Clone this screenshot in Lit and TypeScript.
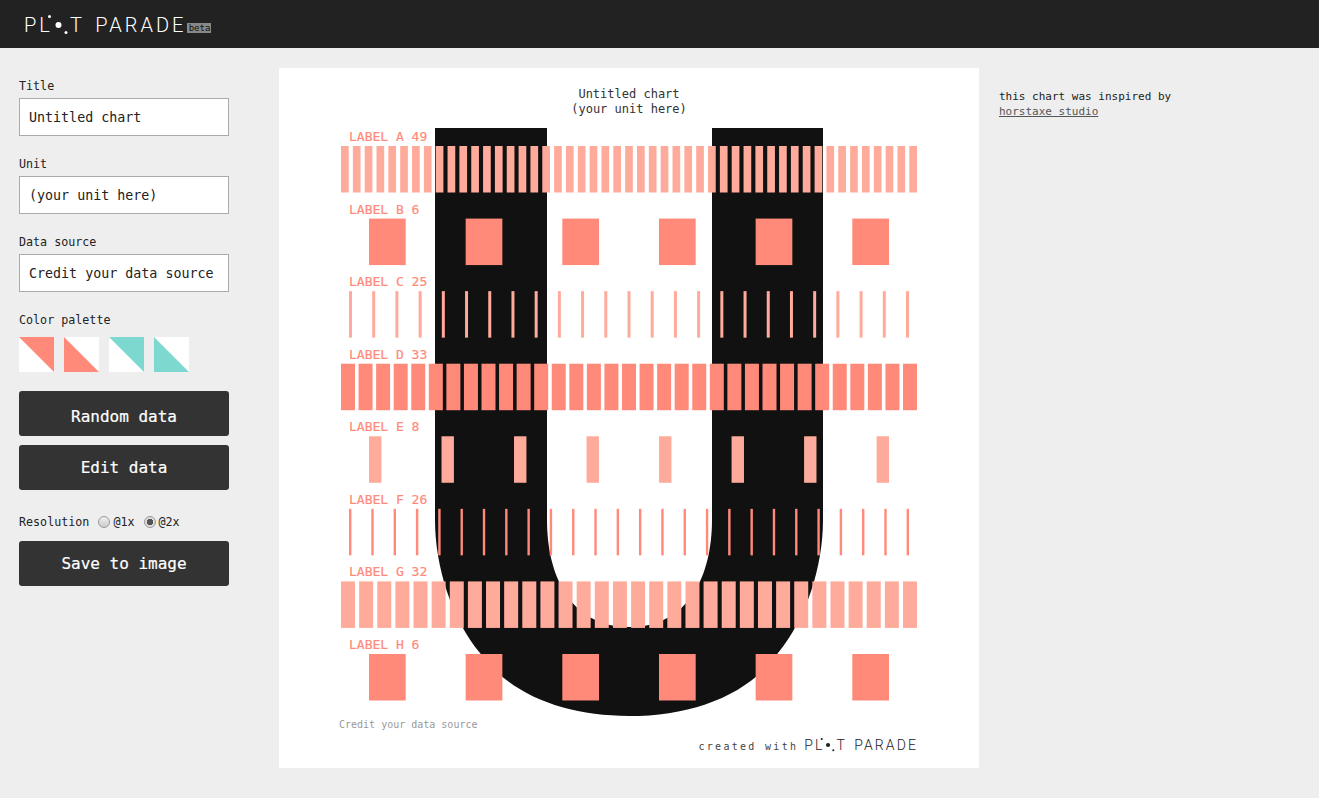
import { LitElement, html, css, svg } from "lit";
import { customElement } from "lit/decorators.js";

const LIGHT = "#ffab9b";
const DARK = "#ff8a7a";

interface Row { label: string; n: number; inset: number; w: number; color: string; }

const rows: Row[] = [
  { label: "LABEL A 49", n: 49, inset: 0, w: 7.7, color: LIGHT },
  { label: "LABEL B 6", n: 6, inset: 28, w: 36.7, color: DARK },
  { label: "LABEL C 25", n: 25, inset: 8, w: 3, color: LIGHT },
  { label: "LABEL D 33", n: 33, inset: 0, w: 14, color: DARK },
  { label: "LABEL E 8", n: 8, inset: 28, w: 12.4, color: LIGHT },
  { label: "LABEL F 26", n: 26, inset: 8, w: 2.4, color: DARK },
  { label: "LABEL G 32", n: 32, inset: 0, w: 14, color: LIGHT },
  { label: "LABEL H 6", n: 6, inset: 28, w: 36.7, color: DARK },
];

const U_PATH =
  "M435 128V520C435 567 452 619 480 653C510 695 565 716 629 716C693 716 748 695 778 653C806 619 823 567 823 520V128H712V520C712 575 689 627 629.5 627C570 627 547 575 547 520V128Z";

@customElement("plot-logo")
class PlotLogo extends LitElement {
  static styles = css`
    :host { display: inline-flex; align-items: baseline; font-family: Roboto, "Liberation Sans", sans-serif; font-weight: 300; letter-spacing: 0.15em; word-spacing: 0.15em; white-space: pre; line-height: 1; }
    .dots { display: inline-block; width: 1.15em; height: 1em; margin-left: -0.3em; position: relative; align-self: center; }
    svg { position: absolute; left: 0; top: 0; width: 100%; height: 100%; overflow: visible; fill: currentColor; }
  `;
  render() {
    return html`<span>PL</span><span class="dots"><svg viewBox="0 0 23 20"><circle cx="2.5" cy="1.5" r="1.5"></circle><circle cx="11.5" cy="10" r="3"></circle><circle cx="19" cy="17.5" r="1.5"></circle></svg></span><span>T PARADE</span>`;
  }
}

@customElement("app-root")
export class AppRoot extends LitElement {
  static styles = css`
    :host { display: block; background: #eee; color: #222; font-family: "DejaVu Sans Mono", "Liberation Mono", monospace; min-height: 798px; }
    .top { height: 48px; background: #222; color: #fff; display: flex; align-items: center; padding-left: 24px; gap: 1px; box-sizing: border-box; }
    .top plot-logo { font-size: 20px; margin-top: 2px; }
    .beta { background: #888; color: #111; font-size: 9px; line-height: 10px; margin-top: 8px; height: 10px; width: 24px; text-align: center; }
    .main { display: flex; padding: 20px 0 30px 19px; align-items: flex-start; }
    .side { width: 210px; margin-right: 50px; display: flex; flex-direction: column; }
    label.t { font-size: 11.7px; line-height: 16px; display: block; margin-bottom: 4px; margin-top: 10px; }
    .field { margin-bottom: 10px; }
    input.text { display: block; width: 210px; height: 38px; box-sizing: border-box; border: 1px solid #aaa; background: #fff; padding: 0 9px; font: 13.33px "DejaVu Sans Mono", monospace; color: #222; border-radius: 0; outline: none; }
    .swatches { display: flex; gap: 10px; margin-top: 9px; margin-bottom: 9px; }
    .sw { width: 35px; height: 35px; }
    .a { background: linear-gradient(to top right, #fff 49.4%, #ff8a7a 50.6%); }
    .b { background: linear-gradient(to top right, #ff8a7a 49.4%, #fff 50.6%); }
    .c { background: linear-gradient(to top right, #fff 49.4%, #7dd9d0 50.6%); }
    .d { background: linear-gradient(to top right, #7dd9d0 49.4%, #fff 50.6%); }
    button { display: block; width: 210px; height: 45px; background: #333; color: #fff; border: 0; border-radius: 3px; font: 500 16px "DejaVu Sans Mono", monospace; -webkit-text-stroke: 0.2px #fff; margin-bottom: 9px; padding: 0; }
    button.low { padding-top: 5px; }
    .res { display: flex; align-items: center; font-size: 11.7px; height: 16px; margin-top: 15px; margin-bottom: 11px; }
    .res span { margin-right: 9px; }
    .res input { appearance: none; width: 12px; height: 12px; margin: 0 3px 0 0; border-radius: 50%; border: 1px solid #999; background: linear-gradient(#eee, #ccc); box-sizing: border-box; }
    .res input:checked { background: radial-gradient(circle, #555 0 3px, #ddd 3.5px); }
    .res label { margin-right: 9px; display: flex; align-items: center; }
    .card { width: 700px; height: 700px; background: #fff; flex: none; display: flex; flex-direction: column; box-sizing: border-box; padding-top: 19px; }
    .ct { text-align: center; font-size: 12px; line-height: 15px; color: #333; margin-bottom: 1px; }
    .card svg.chart { display: block; width: 700px; height: 600px; }
    .chart text { font: 500 13px "DejaVu Sans Mono", monospace; fill: #ff8a7a; stroke: #ff8a7a; stroke-width: 0.2px; }
    .src { font-size: 10px; line-height: 12px; color: #999; padding-left: 60px; margin-top: 1px; }
    .made { display: flex; justify-content: flex-end; align-items: center; padding-right: 61px; margin-top: 7px; color: #444; }
    .made span { font-size: 10px; letter-spacing: 2.3px; margin-right: 6px; margin-top: 3px; }
    .made plot-logo { font-size: 14px; color: #222; }
    .note { margin-left: 20px; margin-top: 21px; font-size: 11px; line-height: 15px; color: #222; }
    .note a { color: #555; display: block; }
  `;

  renderRow(r: Row, i: number) {
    const y = 146 + i * 72.57;
    const left = 341 + r.inset;
    const span = 576 - 2 * r.inset - r.w;
    const step = span / (r.n - 1);
    return svg`<text x="349" y=${Math.floor(y - 4.5)}>${r.label}</text>${Array.from({ length: r.n }, (_, k) =>
      svg`<rect x=${left + k * step} y=${y} width=${r.w} height="46.5" fill=${r.color}></rect>`)}`;
  }

  render() {
    return html`
      <div class="top"><plot-logo></plot-logo><span class="beta">beta</span></div>
      <div class="main">
        <div class="side">
          <div class="field"><label class="t">Title</label><input class="text" .value=${"Untitled chart"} /></div>
          <div class="field"><label class="t">Unit</label><input class="text" .value=${"(your unit here)"} /></div>
          <div class="field"><label class="t">Data source</label><input class="text" .value=${"Credit your data source"} /></div>
          <div class="field"><label class="t">Color palette</label>
            <div class="swatches"><div class="sw a"></div><div class="sw b"></div><div class="sw c"></div><div class="sw d"></div></div>
          </div>
          <button class="low">Random data</button>
          <button>Edit data</button>
          <div class="res"><span>Resolution</span>
            <label><input type="radio" name="r" />@1x</label>
            <label><input type="radio" name="r" checked />@2x</label>
          </div>
          <button>Save to image</button>
        </div>
        <div class="card">
          <div class="ct">Untitled chart<br />(your unit here)</div>
          <svg class="chart" viewBox="279 118 700 600">
            <path d=${U_PATH} fill="#111"></path>
            ${rows.map((r, i) => this.renderRow(r, i))}
          </svg>
          <div class="src">Credit your data source</div>
          <div class="made"><span>created with</span><plot-logo></plot-logo></div>
        </div>
        <div class="note">this chart was inspired by<a href="#">horstaxe studio</a></div>
      </div>
    `;
  }
}
